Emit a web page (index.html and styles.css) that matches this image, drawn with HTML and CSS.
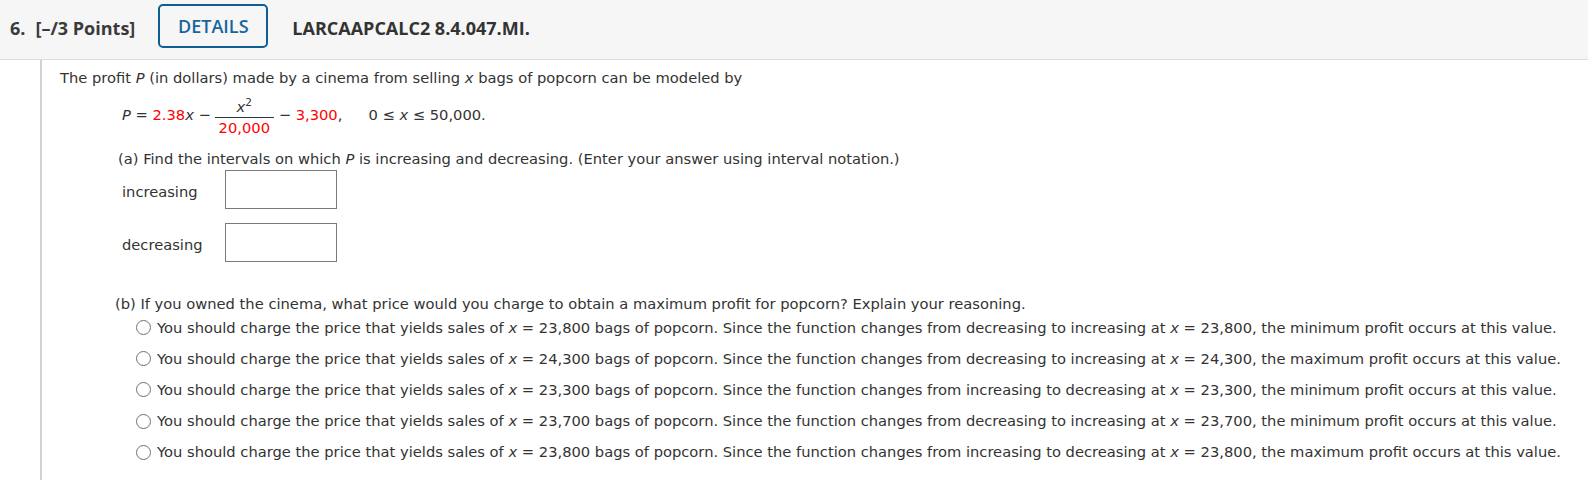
FILE: index.html
```html
<!DOCTYPE html>
<html lang="en">
<head>
<meta charset="utf-8">
<title>Question 6</title>
<link rel="stylesheet" href="styles.css">
</head>
<body>
<div class="question">
  <div class="qheader">
    <span class="qnum">6.</span>
    <span class="points">[–/3 Points]</span>
    <span class="details">DETAILS</span>
    <span class="qid">LARCAAPCALC2 8.4.047.MI.</span>
  </div>
  <div class="qbody">
    <p class="intro">The profit <i>P</i> (in dollars) made by a cinema from selling <i>x</i> bags of popcorn can be modeled by</p>
    <div class="equation">
      <span class="term"><i>P</i> = <span class="red">2.38</span><i>x</i> − </span>
      <span class="frac">
        <span class="num"><i>x</i><sup>2</sup></span>
        <span class="den red">20,000</span>
      </span>
      <span class="term"> − <span class="red">3,300</span>,</span>
      <span class="term range">0 ≤ <i>x</i> ≤ 50,000.</span>
    </div>
    <p class="part-a">(a) Find the intervals on which <i>P</i> is increasing and decreasing. (Enter your answer using interval notation.)</p>
    <div class="answers">
      <span class="label">increasing</span>
      <span class="box"></span>
      <span class="label">decreasing</span>
      <span class="box"></span>
    </div>
    <p class="part-b">(b) If you owned the cinema, what price would you charge to obtain a maximum profit for popcorn? Explain your reasoning.</p>
    <ul class="options">
      <li><span class="radio"></span><span>You should charge the price that yields sales of <i>x</i> = 23,800 bags of popcorn. Since the function changes from decreasing to increasing at <i>x</i> = 23,800, the minimum profit occurs at this value.</span></li>
      <li><span class="radio"></span><span>You should charge the price that yields sales of <i>x</i> = 24,300 bags of popcorn. Since the function changes from decreasing to increasing at <i>x</i> = 24,300, the maximum profit occurs at this value.</span></li>
      <li><span class="radio"></span><span>You should charge the price that yields sales of <i>x</i> = 23,300 bags of popcorn. Since the function changes from increasing to decreasing at <i>x</i> = 23,300, the minimum profit occurs at this value.</span></li>
      <li><span class="radio"></span><span>You should charge the price that yields sales of <i>x</i> = 23,700 bags of popcorn. Since the function changes from decreasing to increasing at <i>x</i> = 23,700, the minimum profit occurs at this value.</span></li>
      <li><span class="radio"></span><span>You should charge the price that yields sales of <i>x</i> = 23,800 bags of popcorn. Since the function changes from increasing to decreasing at <i>x</i> = 23,800, the maximum profit occurs at this value.</span></li>
    </ul>
  </div>
</div>
</body>
</html>
```
FILE: styles.css
```css
html, body {
  margin: 0;
  padding: 0;
  background: #ffffff;
}
.question {
  width: 1588px;
  height: 480px;
  display: flex;
  flex-direction: column;
  overflow: hidden;
}
.qheader {
  box-sizing: border-box;
  height: 60px;
  background: #f6f6f6;
  border-bottom: 1px solid #dcdcdc;
  display: flex;
  align-items: center;
  padding: 0 0 4px 10px;
  font-family: "Open Sans", sans-serif;
  font-weight: 700;
  font-size: 18px;
  color: #3a3a3a;
  flex-shrink: 0;
}
.qnum {
  margin-right: 10px;
}
.points {
  margin-right: 23px;
}
.details {
  box-sizing: border-box;
  width: 110px;
  height: 44px;
  border: 2px solid #0e5e94;
  border-radius: 5px;
  color: #17659e;
  font-weight: 600;
  font-size: 18px;
  display: flex;
  align-items: center;
  justify-content: center;
  margin-right: 24px;
  margin-top: -3px;
}
.qid {
  color: #333333;
}
.qbody {
  flex: 1;
  margin-left: 40px;
  border-left: 2px solid #d2d2d2;
  padding: 9px 0 0 18px;
  font-family: "DejaVu Sans", Verdana, sans-serif;
  font-size: 14.7px;
  line-height: 18px;
  color: #333333;
}
.qbody p {
  margin: 0;
}
.red {
  color: #ff0000;
}
.equation {
  display: flex;
  align-items: flex-start;
  margin: 8px 0 0 62px;
  white-space: pre;
}
.term {
  margin-top: 10.5px;
}
.frac {
  display: inline-flex;
  flex-direction: column;
  align-items: center;
  margin: 0 0 0 -1px;
}
.num {
  padding: 2px 4px 0;
  line-height: 20px;
  border-bottom: 1px solid #333333;
  align-self: stretch;
  text-align: center;
}
.num sup {
  font-size: 10.5px;
  line-height: 0;
}
.den {
  padding: 1px 4px 0;
  line-height: 18px;
}
.range {
  margin-left: 26px;
}
.qbody .part-a {
  margin: 13px 0 0 58px;
}
.answers {
  display: grid;
  grid-template-columns: 103px 112px;
  row-gap: 14px;
  align-items: center;
  margin: 2px 0 0 62px;
}
.label {
  padding-top: 5px;
}
.box {
  box-sizing: border-box;
  height: 39px;
  border: 1px solid #7a7a7a;
}
.qbody .part-b {
  margin: 33px 0 0 55px;
}
.options {
  list-style: none;
  margin: -1px 0 0 76px;
  padding: 0;
}
.options li {
  display: flex;
  align-items: center;
  height: 31.2px;
}
.radio {
  box-sizing: border-box;
  width: 15px;
  height: 15px;
  border: 1px solid #707070;
  border-radius: 50%;
  margin-right: 6px;
  flex-shrink: 0;
}
```
